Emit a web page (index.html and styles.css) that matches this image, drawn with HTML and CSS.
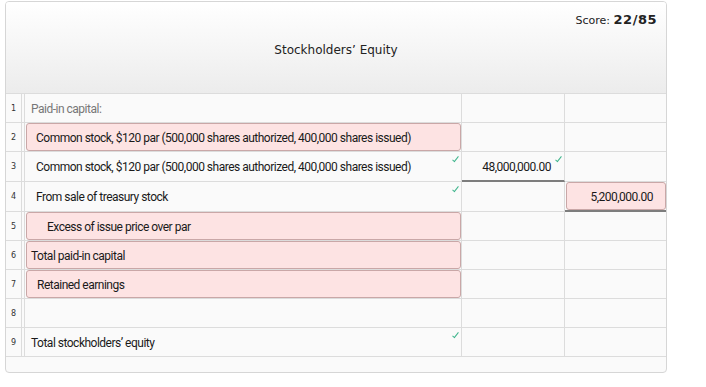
FILE: index.html
```html
<!DOCTYPE html>
<html>
<head>
<meta charset="utf-8">
<link rel="stylesheet" href="styles.css">
</head>
<body>
<div class="panel">
  <div class="header">
    <div class="score">Score: <b>22/85</b></div>
    <div class="title">Stockholders’ Equity</div>
  </div>
  <div class="row">
    <div class="num">1</div>
    <div class="label muted"><span class="t">Paid-in capital:</span></div>
    <div class="cell"></div>
    <div class="cell"></div>
  </div>
  <div class="row">
    <div class="num">2</div>
    <div class="label"><div class="box ind1">Common stock, $120 par (500,000 shares authorized, 400,000 shares issued)</div></div>
    <div class="cell"></div>
    <div class="cell"></div>
  </div>
  <div class="row tall">
    <div class="num">3</div>
    <div class="label"><span class="t ind1">Common stock, $120 par (500,000 shares authorized, 400,000 shares issued)</span><span class="chk"></span></div>
    <div class="cell amount underline"><span class="v">48,000,000.00</span><span class="chk"></span></div>
    <div class="cell"></div>
  </div>
  <div class="row tall">
    <div class="num">4</div>
    <div class="label"><span class="t ind1">From sale of treasury stock</span><span class="chk"></span></div>
    <div class="cell"></div>
    <div class="cell underline"><div class="box amountbox">5,200,000.00</div></div>
  </div>
  <div class="row">
    <div class="num">5</div>
    <div class="label"><div class="box ind2">Excess of issue price over par</div></div>
    <div class="cell"></div>
    <div class="cell"></div>
  </div>
  <div class="row">
    <div class="num">6</div>
    <div class="label"><div class="box ind0">Total paid-in capital</div></div>
    <div class="cell"></div>
    <div class="cell"></div>
  </div>
  <div class="row">
    <div class="num">7</div>
    <div class="label"><div class="box ind1b">Retained earnings</div></div>
    <div class="cell"></div>
    <div class="cell"></div>
  </div>
  <div class="row">
    <div class="num">8</div>
    <div class="label"></div>
    <div class="cell"></div>
    <div class="cell"></div>
  </div>
  <div class="row">
    <div class="num">9</div>
    <div class="label"><span class="t">Total stockholders’ equity</span><span class="chk"></span></div>
    <div class="cell"></div>
    <div class="cell"></div>
  </div>
  <div class="footer"></div>
</div>
</body>
</html>
```
FILE: styles.css
```css
html, body {
  margin: 0;
  padding: 0;
  background: #ffffff;
}
body {
  padding: 1px 0 0 5px;
}
.panel {
  width: 662px;
  box-sizing: border-box;
  border: 1px solid #d6d6d6;
  border-radius: 4px;
  background: #fafafa;
  overflow: hidden;
  font-family: Roboto, "Liberation Sans", sans-serif;
  font-size: 12px;
  letter-spacing: -0.5px;
  color: #1a1a1a;
}
.header {
  position: relative;
  height: 92px;
  box-sizing: border-box;
  background: linear-gradient(#ffffff, #ececec);
  border-bottom: 1px solid #dcdcdc;
  display: flex;
  align-items: center;
  justify-content: center;
}
.title {
  font-family: "DejaVu Sans", sans-serif;
  letter-spacing: 0;
  font-size: 12px;
  color: #222;
  padding-top: 5px;
}
.score {
  position: absolute;
  right: 9px;
  top: 10px;
  font-family: "DejaVu Sans", sans-serif;
  letter-spacing: 0;
  font-size: 11px;
  color: #222;
}
.score b {
  font-size: 13px;
  letter-spacing: 0.5px;
}
.row {
  display: grid;
  grid-template-columns: 16px 440px 103px 101px;
  height: 29px;
  box-sizing: border-box;
  border-bottom: 1px solid #dcdcdc;
}
.row.tall {
  height: 30px;
}
.num {
  border-right: 1px solid #dcdcdc;
  font-family: "DejaVu Sans", sans-serif;
  letter-spacing: 0;
  font-size: 8px;
  color: #333;
  display: flex;
  align-items: center;
  justify-content: center;
}
.label {
  position: relative;
  border-left: 1px solid #dcdcdc;
  margin-left: 2px;
  border-right: 1px solid #dcdcdc;
  display: flex;
  align-items: center;
  padding: 0 0 0 1px;
  white-space: nowrap;
}
.cell {
  position: relative;
  border-right: 1px solid #dcdcdc;
  display: flex;
  align-items: center;
}
.row .cell:last-child {
  border-right: none;
}
.t {
  padding-left: 5px;
  padding-top: 1px;
}
.muted {
  color: #777;
}
.t.ind1 {
  padding-left: 10px;
}
.box {
  box-sizing: border-box;
  width: 100%;
  height: 100%;
  background: #fde3e3;
  border: 1px solid #c9a7a7;
  border-radius: 3px;
  display: flex;
  align-items: center;
  padding-top: 1px;
}
.box.ind0 { padding-left: 4px; }
.box.ind1 { padding-left: 9px; }
.box.ind1b { padding-left: 10px; }
.box.ind2 { padding-left: 20px; }
.amount {
  justify-content: flex-end;
  padding-right: 13px;
}
.v {
  padding-top: 1px;
}
.amountbox {
  justify-content: flex-end;
  padding-right: 12px;
}
.underline {
  border-bottom: 2px solid #7d7d7d;
  margin-bottom: -1px;
}
.cell.underline .box {
  margin-left: 1px;
}
.chk {
  position: absolute;
  right: 4px;
  top: 3px;
  width: 2px;
  height: 6px;
  border-right: 1.5px solid #3fb58c;
  border-bottom: 1.5px solid #3fb58c;
  transform: rotate(38deg);
}
.footer {
  height: 15px;
}
```
